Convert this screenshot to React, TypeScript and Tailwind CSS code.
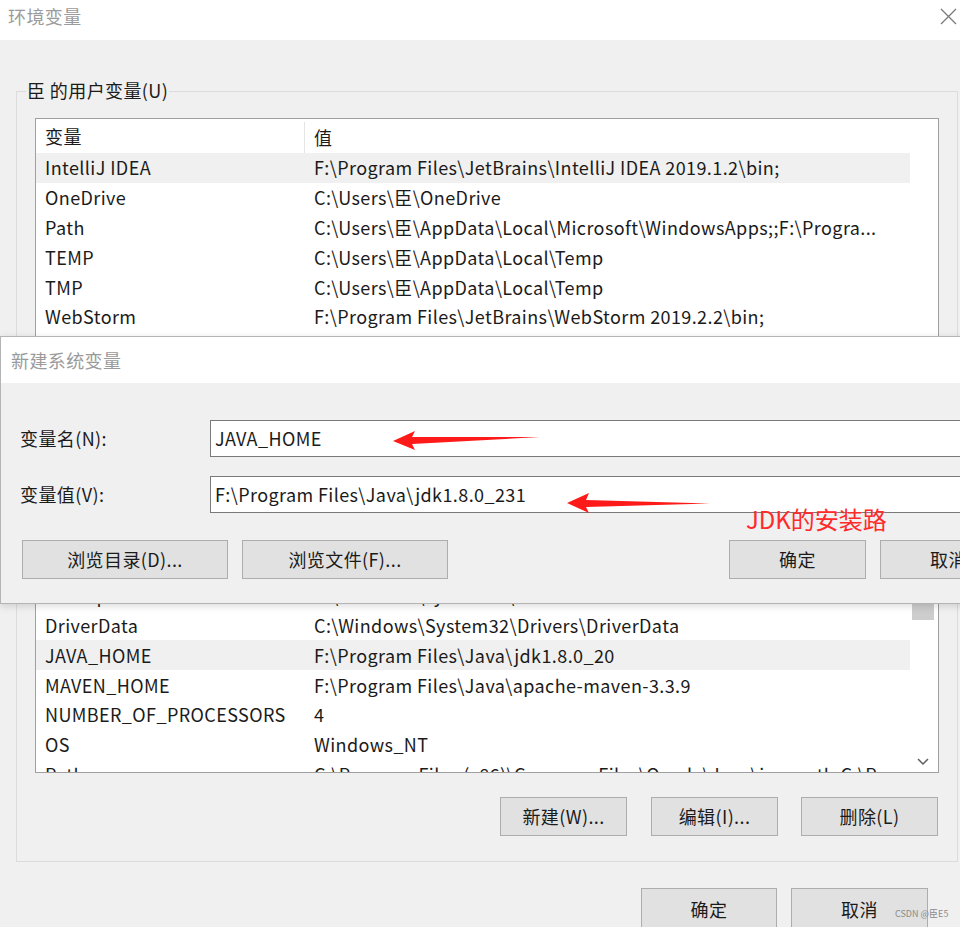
import React from "react";

type Item = { name: string; value: string; hl?: boolean };

const topRows: Item[] = [
  { name: "IntelliJ IDEA", value: "F:\\Program Files\\JetBrains\\IntelliJ IDEA 2019.1.2\\bin;", hl: true },
  { name: "OneDrive", value: "C:\\Users\\臣\\OneDrive" },
  { name: "Path", value: "C:\\Users\\臣\\AppData\\Local\\Microsoft\\WindowsApps;;F:\\Progra..." },
  { name: "TEMP", value: "C:\\Users\\臣\\AppData\\Local\\Temp" },
  { name: "TMP", value: "C:\\Users\\臣\\AppData\\Local\\Temp" },
  { name: "WebStorm", value: "F:\\Program Files\\JetBrains\\WebStorm 2019.2.2\\bin;" },
];

const bottomRows: Item[] = [
  { name: "ComSpec", value: "C:\\Windows\\system32\\cmd.exe" },
  { name: "DriverData", value: "C:\\Windows\\System32\\Drivers\\DriverData" },
  { name: "JAVA_HOME", value: "F:\\Program Files\\Java\\jdk1.8.0_20", hl: true },
  { name: "MAVEN_HOME", value: "F:\\Program Files\\Java\\apache-maven-3.3.9" },
  { name: "NUMBER_OF_PROCESSORS", value: "4" },
  { name: "OS", value: "Windows_NT" },
  { name: "Path", value: "C:\\Program Files (x86)\\Common Files\\Oracle\\Java\\javapath;C:\\P..." },
];

function Row({ item }: { item: Item }) {
  return (
    <div
      className={`flex h-[29.8px] shrink-0 items-center text-[18px] text-[#1b1b1b] ${
        item.hl ? "bg-[#f0f0f0]" : ""
      }`}
    >
      <div className="w-[269px] shrink-0 whitespace-nowrap pl-[9px]">{item.name}</div>
      <div className="overflow-hidden whitespace-nowrap pl-[9px]">{item.value}</div>
    </div>
  );
}

function WinButton({ label, w }: { label: string; w: string }) {
  return (
    <div
      className={`${w} flex h-[39px] shrink-0 items-center justify-center border border-[#adadad] bg-[#e1e1e1] text-[18px] text-[#1b1b1b]`}
    >
      {label}
    </div>
  );
}

export default function App() {
  return (
    <div className="relative h-[927px] w-[960px] overflow-hidden bg-[#f0f0f0] font-['Noto_Sans_CJK_SC','Noto_Sans',sans-serif] tracking-[0.4px]">
      {/* window title */}
      <div className="flex h-[40px] items-center justify-between bg-white pb-[7px] pl-[8px] pr-[3px]">
        <span className="text-[18px] text-[#9b9b9b]">环境变量</span>
        <svg width="17" height="17" viewBox="0 0 17 17">
          <path d="M1 1 L16 16 M16 1 L1 16" stroke="#7a7a7a" strokeWidth="1.3" fill="none" />
        </svg>
      </div>

      {/* group box */}
      <div className="relative ml-[16px] mr-[2px] mt-[51px] border border-[#dcdcdc] px-[18px] pb-[25px] pt-[26px]">
        <span className="absolute -top-[15px] left-[9px] bg-[#f0f0f0] px-[1px] text-[18px] text-[#1b1b1b]">
          臣 的用户变量(U)
        </span>

        {/* list */}
        <div className="flex h-[655px] flex-col overflow-hidden border border-[#a0a0a0] bg-white pt-[3px]">
          <div className="flex shrink-0">
            <div className="w-[874px] shrink-0">
              <div className="flex h-[31px] items-center text-[18px] text-[#1b1b1b]">
                <div className="h-full w-[269px] shrink-0 border-r border-[#e5e5e5] pl-[9px] leading-[29px]">
                  变量
                </div>
                <div className="pl-[9px] leading-[29px]">值</div>
              </div>
              {topRows.map((r) => (
                <Row key={r.name + r.value} item={r} />
              ))}
            </div>
          </div>

          <div className="flex min-h-0 flex-1">
            <div className="w-[874px] shrink-0 overflow-hidden">
              <div className="h-[249px]" />
              {bottomRows.map((r) => (
                <Row key={r.name + r.value} item={r} />
              ))}
            </div>
            <div className="flex w-[26px] flex-col items-center pt-[261px]">
              <div className="h-[27px] w-[22px] bg-[#cdcdcd]" />
              <div className="mb-[6px] mt-auto">
                <svg width="12" height="8" viewBox="0 0 12 8">
                  <path d="M1 1 L6 6 L11 1" stroke="#606060" strokeWidth="1.5" fill="none" />
                </svg>
              </div>
            </div>
          </div>
        </div>

        <div className="mt-[24px] flex justify-end pr-[1px]">
          <WinButton label="新建(W)..." w="w-[127px]" />
          <div className="ml-[24px]">
            <WinButton label="编辑(I)..." w="w-[127px]" />
          </div>
          <div className="ml-[23px]">
            <WinButton label="删除(L)" w="w-[137px]" />
          </div>
        </div>
      </div>

      {/* main buttons */}
      <div className="mt-[26px] flex justify-end gap-[14px] pr-[32px]">
        <div className="flex h-[42px] w-[136px] items-center justify-center border border-[#adadad] bg-[#e1e1e1] text-[18px] text-[#1b1b1b]">
          确定
        </div>
        <div className="flex h-[42px] w-[137px] items-center justify-center border border-[#adadad] bg-[#e1e1e1] text-[18px] text-[#1b1b1b]">
          取消
        </div>
      </div>

      {/* new system variable dialog */}
      <div className="absolute left-0 top-[336px] w-[1000px] border border-[#b4b4b4] bg-[#f0f0f0] shadow-[0_2px_8px_rgba(0,0,0,0.15)]">
        <div className="flex h-[46px] items-center bg-white pl-[10px] text-[18px] text-[#9a9a9a]">新建系统变量</div>
        <div className="pb-[24px] pt-[37px]">
          <div className="flex items-center">
            <div className="w-[209px] shrink-0 pl-[19px] text-[18px] text-[#1b1b1b]">变量名(N):</div>
            <div className="flex h-[37px] flex-1 items-center border border-[#7a7a7a] bg-white pl-[4px] text-[18px] text-[#1b1b1b]">
              JAVA_HOME
            </div>
          </div>
          <div className="mt-[19px] flex items-center">
            <div className="w-[209px] shrink-0 pl-[19px] text-[18px] text-[#1b1b1b]">变量值(V):</div>
            <div className="flex h-[37px] flex-1 items-center border border-[#7a7a7a] bg-white pl-[4px] text-[18px] text-[#1b1b1b]">
              F:\Program Files\Java\jdk1.8.0_231
            </div>
          </div>
          <div className="mt-[27px] flex pl-[21px]">
            <WinButton label="浏览目录(D)..." w="w-[206px]" />
            <div className="ml-[14px]">
              <WinButton label="浏览文件(F)..." w="w-[206px]" />
            </div>
            <div className="ml-[281px]">
              <WinButton label="确定" w="w-[137px]" />
            </div>
            <div className="ml-[14px]">
              <WinButton label="取消" w="w-[137px]" />
            </div>
          </div>
        </div>
      </div>

      {/* annotations */}
      <svg className="pointer-events-none absolute inset-0" width="960" height="927" viewBox="0 0 960 927">
        <path d="M393 441 L415 431 L412 437 L540 437 L412 444 L415 450 Z" fill="#ff1a1a" />
        <path d="M567 503 L589 493 L586 500 L710 503.5 L586 507 L589 513 Z" fill="#ff1a1a" />
      </svg>
      <span className="absolute left-[746px] top-[503px] text-[24px] leading-[32px] tracking-normal text-[#ff2a2a]">
        JDK的安装路
      </span>

      <span className="absolute left-[895px] top-[907px] text-[9px] tracking-normal text-[#8a8a8a]">CSDN @臣E5</span>
    </div>
  );
}
